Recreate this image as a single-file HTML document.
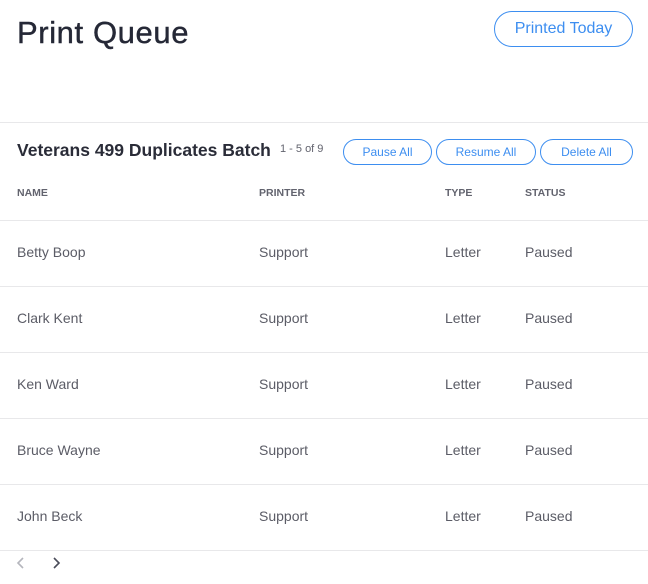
<!DOCTYPE html>
<html><head><style>
body{margin:0;width:648px;height:584px;background:#fff;font-family:"Liberation Sans",sans-serif;position:relative;overflow:hidden}
.a{position:absolute;white-space:nowrap}
.btn{position:absolute;border:1px solid #3d8ef0;border-radius:20px;color:#3d8ef0;box-sizing:border-box;display:flex;align-items:center;justify-content:center}
.hl{position:absolute;left:0;width:648px;height:1px;background:#e8e8ea}
.h{font-size:10.5px;font-weight:bold;color:#62636e;top:187px}
.c{font-size:14px;color:#5b5c66}
</style></head><body>
<div class="a" style="left:17px;top:15px;font-size:31px;color:#252836;letter-spacing:0.6px;-webkit-text-stroke:0.4px #252836">Print Queue</div>
<div class="btn" style="left:494px;top:11px;width:139px;height:36px;font-size:16px">Printed Today</div>
<div class="hl" style="top:122px"></div>
<div class="a" style="left:17px;top:140px;font-size:17.5px;font-weight:bold;color:#2a2c38">Veterans 499 Duplicates Batch</div>
<div class="a" style="left:280px;top:143px;font-size:11px;color:#62636e">1 - 5 of 9</div>
<div class="btn" style="left:343px;top:139px;width:89px;height:26px;font-size:12px">Pause All</div>
<div class="btn" style="left:436px;top:139px;width:100px;height:26px;font-size:12px">Resume All</div>
<div class="btn" style="left:540px;top:139px;width:93px;height:26px;font-size:12px">Delete All</div>
<div class="a h" style="left:17px">NAME</div>
<div class="a h" style="left:259px">PRINTER</div>
<div class="a h" style="left:445px">TYPE</div>
<div class="a h" style="left:525px">STATUS</div>
<div class="hl" style="top:220px"></div>

<div class="a c" style="left:17px;top:244px">Betty Boop</div><div class="a c" style="left:259px;top:244px">Support</div><div class="a c" style="left:445px;top:244px">Letter</div><div class="a c" style="left:525px;top:244px">Paused</div>
<div class="hl" style="top:286px"></div>
<div class="a c" style="left:17px;top:310px">Clark Kent</div><div class="a c" style="left:259px;top:310px">Support</div><div class="a c" style="left:445px;top:310px">Letter</div><div class="a c" style="left:525px;top:310px">Paused</div>
<div class="hl" style="top:352px"></div>
<div class="a c" style="left:17px;top:376px">Ken Ward</div><div class="a c" style="left:259px;top:376px">Support</div><div class="a c" style="left:445px;top:376px">Letter</div><div class="a c" style="left:525px;top:376px">Paused</div>
<div class="hl" style="top:418px"></div>
<div class="a c" style="left:17px;top:442px">Bruce Wayne</div><div class="a c" style="left:259px;top:442px">Support</div><div class="a c" style="left:445px;top:442px">Letter</div><div class="a c" style="left:525px;top:442px">Paused</div>
<div class="hl" style="top:484px"></div>
<div class="a c" style="left:17px;top:508px">John Beck</div><div class="a c" style="left:259px;top:508px">Support</div><div class="a c" style="left:445px;top:508px">Letter</div><div class="a c" style="left:525px;top:508px">Paused</div>
<div class="hl" style="top:550px"></div>
<svg class="a" style="left:15px;top:556px" width="12" height="14"><path d="M8 2 L3 7 L8 12" fill="none" stroke="#b5b6bd" stroke-width="1.6"/></svg>
<svg class="a" style="left:51px;top:556px" width="12" height="14"><path d="M3 2 L8 7 L3 12" fill="none" stroke="#4a4c5a" stroke-width="1.6"/></svg>
</body></html>
